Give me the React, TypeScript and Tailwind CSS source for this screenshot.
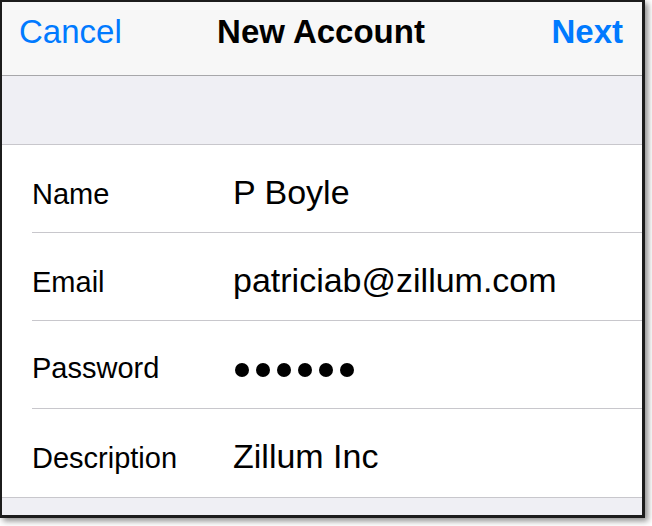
import React from "react";

type Field = { label: string; value: string; secure?: boolean };

const FIELDS: Field[] = [
  { label: "Name", value: "P Boyle" },
  { label: "Email", value: "patriciab@zillum.com" },
  { label: "Password", value: "••••••", secure: true },
  { label: "Description", value: "Zillum Inc" },
];

/** Six filled dots standing in for a masked password. */
const SecureDots = ({ count }: { count: number }) => (
  <span className="flex items-center gap-[7px] ml-[2px] translate-y-[-1px]">
    {Array.from({ length: count }).map((_, i) => (
      <span key={i} className="block w-[14px] h-[14px] rounded-full bg-black" />
    ))}
  </span>
);

const Row = ({ field, last }: { field: Field; last: boolean }) => (
  <div className="h-[88px] pl-[30px]">
    <div
      className={`h-full flex items-baseline pt-[27px] ${last ? "" : "border-b border-[#c8c7cc]"}`}
    >
      <span className="w-[201px] text-[29px] leading-[40px] text-black">{field.label}</span>
      {field.secure ? (
        <span className="h-[40px] flex items-center">
          <SecureDots count={field.value.length} />
        </span>
      ) : (
        <span className="text-[34px] leading-[40px] text-black">{field.value}</span>
      )}
    </div>
  </div>
);

export default function App() {
  return (
    <div className="w-[652px] h-[526px] bg-white font-['Liberation_Sans',Arial,sans-serif]">
      <div className="w-[645px] h-[518px] border-l-2 border-t-2 border-r-[3px] border-b-[3px] border-[#1c1c1c] shadow-[3px_3px_6px_rgba(0,0,0,0.45)] bg-[#efeff4] flex flex-col overflow-hidden">
        {/* Nav bar */}
        <header className="h-[74px] bg-[#f7f7f7] border-b border-[#a7a7aa] grid grid-cols-[1fr_auto_1fr] items-start pt-[11px] pl-[17px] pr-[19px] text-[33px] leading-[38px]">
          <span className="text-[#007aff]">Cancel</span>
          <span className="font-bold text-black">New Account</span>
          <span className="font-bold text-[#007aff] text-right">Next</span>
        </header>

        {/* Section spacer */}
        <div className="h-[69px] shrink-0 border-b border-[#c8c7cc]" />

        {/* Form rows */}
        <section className="bg-white border-b border-[#c8c7cc]">
          {FIELDS.map((f, i) => (
            <Row key={f.label} field={f} last={i === FIELDS.length - 1} />
          ))}
        </section>

        <div className="flex-1" />
      </div>
    </div>
  );
}
